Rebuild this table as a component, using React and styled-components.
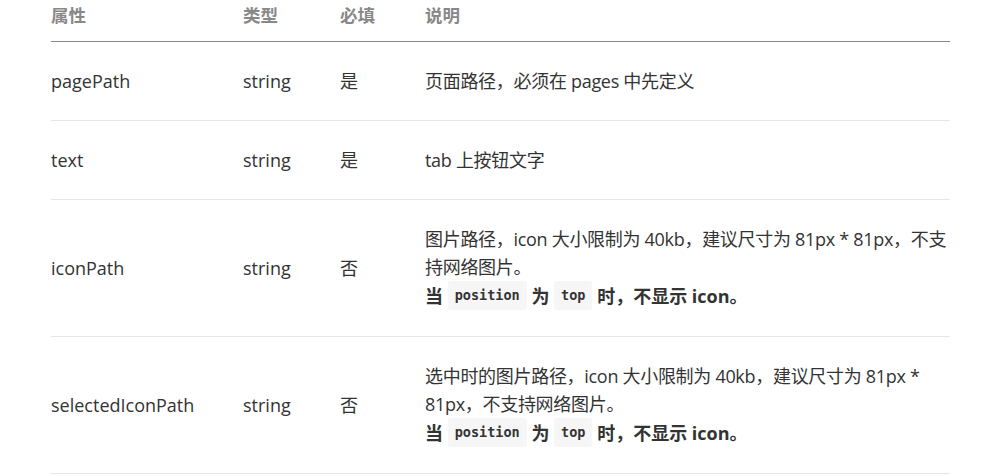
import React from "react";
import styled, { createGlobalStyle } from "styled-components";

const GlobalStyle = createGlobalStyle`
  body {
    margin: 0;
    background: #fff;
    font-family: "Open Sans", "Noto Sans CJK SC", sans-serif;
  }
`;

const rows = [
  {
    name: "pagePath",
    type: "string",
    required: "是",
    desc: ["页面路径，必须在 pages 中先定义"]
  },
  {
    name: "text",
    type: "string",
    required: "是",
    desc: ["tab 上按钮文字"]
  },
  {
    name: "iconPath",
    type: "string",
    required: "否",
    desc: ["图片路径，icon 大小限制为 40kb，建议尺寸为 81px * 81px，不支持网络图片。"],
    note: true
  },
  {
    name: "selectedIconPath",
    type: "string",
    required: "否",
    desc: ["选中时的图片路径，icon 大小限制为 40kb，建议尺寸为 81px * 81px，不支持网络图片。"],
    note: true
  }
];

const App = () => {
  return (
    <>
      <GlobalStyle />
      <Page>
        <Table>
          <HeaderRow>
            <HeadCell>属性</HeadCell>
            <HeadCell>类型</HeadCell>
            <HeadCell>必填</HeadCell>
            <HeadCell>说明</HeadCell>
          </HeaderRow>
          {rows.map(row => (
            <Row key={row.name}>
              <Cell>{row.name}</Cell>
              <Cell>{row.type}</Cell>
              <Cell>{row.required}</Cell>
              <Cell>
                {row.desc.map(d => (
                  <Text key={d}>{d}</Text>
                ))}
                {row.note && (
                  <Strong>
                    当 <Code>position</Code> 为 <Code>top</Code> 时，不显示 icon。
                  </Strong>
                )}
              </Cell>
            </Row>
          ))}
        </Table>
      </Page>
    </>
  );
};

export default App;

const Page = styled.div`
  padding: 1px 0 0 51px;
`;

const Table = styled.div`
  width: 899px;
  display: flex;
  flex-direction: column;
`;

const HeaderRow = styled.div`
  display: grid;
  grid-template-columns: 192px 97px 85px 1fr;
  padding-bottom: 12px;
  border-bottom: 1px solid #888;
`;

const HeadCell = styled.div`
  font-size: 17.5px;
  line-height: 28px;
  font-weight: 700;
  color: #888;
`;

const Row = styled.div`
  display: grid;
  grid-template-columns: 192px 97px 85px 1fr;
  align-items: center;
  padding: 25px 0;
  border-bottom: 1px solid #e6e6e6;
`;

const Cell = styled.div`
  font-size: 18px;
  line-height: 28px;
  color: #333;
`;

const Text = styled.div`
  letter-spacing: -0.3px;
`;

const Strong = styled.div`
  font-weight: 700;
  line-height: 30px;
  color: #333;
`;

const Code = styled.code`
  display: inline-block;
  font-family: "DejaVu Sans Mono", "Liberation Mono", monospace;
  font-size: 13.5px;
  font-weight: 700;
  line-height: 29px;
  padding: 0 7px;
  background: #f6f6f6;
  border-radius: 3px;
  color: #333;
  vertical-align: top;
`;
